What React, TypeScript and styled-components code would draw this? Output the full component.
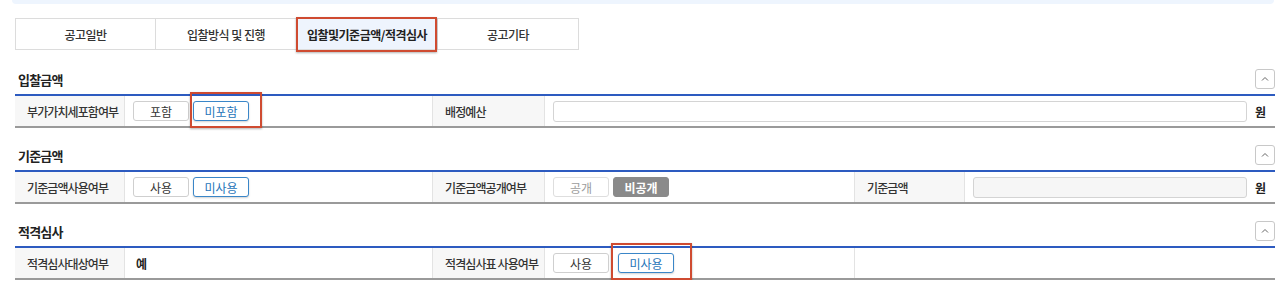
import React from "react";
import styled, { createGlobalStyle } from "styled-components";

const GlobalStyle = createGlobalStyle`
  html, body {
    margin: 0;
    padding: 0;
    background: #fff;
    font-family: "Noto Sans CJK KR", "Noto Sans", sans-serif;
    color: #333;
  }
  * { box-sizing: border-box; }
`;

const Page = styled.div`
  width: 1280px;
`;

const TopPanel = styled.div`
  height: 4px;
  margin: 0 6px 0 12px;
  background: #eef5fe;
  border-radius: 0 0 7px 7px;
`;

const Body = styled.div`
  padding: 0 5px 0 15px;
`;

const TabBar = styled.div`
  display: flex;
  margin-top: 14px;
`;

const Tab = styled.div<{ $active?: boolean }>`
  position: relative;
  width: 141px;
  height: 32px;
  display: flex;
  align-items: center;
  justify-content: center;
  border: 1px solid #dcdcdc;
  border-left: none;
  background: ${p => (p.$active ? "#eef4fd" : "#fff")};
  font-size: 12px;
  letter-spacing: -0.5px;
  font-weight: ${p => (p.$active ? 700 : 500)};
  color: ${p => (p.$active ? "#222" : "#333")};
  &:first-child {
    border-left: 1px solid #dcdcdc;
  }
`;

const Mark = styled.span<{ $t: number; $r: number; $b: number; $l: number }>`
  position: absolute;
  top: ${p => p.$t}px;
  right: ${p => p.$r}px;
  bottom: ${p => p.$b}px;
  left: ${p => p.$l}px;
  border: 2px solid #cf4b31;
  box-shadow: 0 1px 2px rgba(0, 0, 0, 0.3);
  pointer-events: none;
`;

const Section = styled.section<{ $gap: number }>`
  margin-top: ${p => p.$gap}px;
`;

const SectionHead = styled.div`
  height: 20px;
  display: flex;
  align-items: center;
  justify-content: space-between;
  margin-bottom: 5px;
`;

const SectionTitle = styled.h3`
  margin: 0;
  padding-left: 3px;
  font-size: 13px;
  font-weight: 700;
  letter-spacing: -0.8px;
  color: #222;
`;

const FoldButton = styled.button`
  width: 20px;
  height: 20px;
  padding: 0;
  display: flex;
  align-items: center;
  justify-content: center;
  border: 1px solid #c8c8c8;
  border-radius: 3px;
  background: #fff;
`;

const Row = styled.div<{ $cols: string }>`
  display: grid;
  grid-template-columns: ${p => p.$cols};
  border-top: 2px solid #2d5bc0;
  border-bottom: 2px solid #9a9a9a;
  height: 34px;
`;

const Label = styled.div`
  display: flex;
  align-items: center;
  padding-left: 12px;
  background: #f7f7f7;
  border-right: 1px solid #e3e3e3;
  font-size: 12px;
  font-weight: 500;
  letter-spacing: -0.9px;
  color: #333;
`;

const Value = styled.div<{ $last?: boolean }>`
  display: flex;
  align-items: center;
  padding: 0 9px 0 8px;
  border-right: ${p => (p.$last ? "none" : "1px solid #e3e3e3")};
  font-size: 12px;
`;

const ButtonGroup = styled.div<{ $gap?: number }>`
  display: flex;
  gap: ${p => p.$gap ?? 4}px;
`;

const Holder = styled.span`
  position: relative;
  display: inline-flex;
`;

type Kind = "normal" | "selected" | "disabled" | "filled";

const Choice = styled.button<{ $kind: Kind }>`
  height: 20px;
  min-width: 56px;
  padding: 0 10px;
  border-radius: 3px;
  font-family: inherit;
  font-size: 12px;
  letter-spacing: 0;
  background: ${p => (p.$kind === "filled" ? "#8a8a8a" : "#fff")};
  border: 1px solid
    ${p =>
      p.$kind === "selected"
        ? "#3a86c8"
        : p.$kind === "filled"
        ? "#8a8a8a"
        : p.$kind === "disabled"
        ? "#dedede"
        : "#cfcfcf"};
  color: ${p =>
    p.$kind === "selected"
      ? "#2674b8"
      : p.$kind === "filled"
      ? "#fff"
      : p.$kind === "disabled"
      ? "#9c9c9c"
      : "#333"};
  font-weight: ${p => (p.$kind === "filled" ? 700 : 400)};
  box-shadow: ${p =>
    p.$kind === "selected" ? "0 1px 2px rgba(0,0,0,0.18)" : "none"};
`;

const TextInput = styled.input`
  flex: 1;
  height: 21px;
  border: 1px solid #d4d4d4;
  border-radius: 3px;
  background: #fff;
  &:disabled {
    background: #f6f6f6;
  }
`;

const Unit = styled.span`
  margin-left: 8px;
  font-size: 12px;
  font-weight: 700;
  color: #222;
`;

const Strong = styled.span`
  padding-left: 3px;
  font-weight: 700;
  color: #222;
`;

const Chevron = () => (
  <svg width="10" height="10" viewBox="0 0 10 10">
    <polyline
      points="2,6.5 5,3.5 8,6.5"
      fill="none"
      stroke="#666"
      strokeWidth="1"
    />
  </svg>
);

const Head = ({ title }: { title: string }) => (
  <SectionHead>
    <SectionTitle>{title}</SectionTitle>
    <FoldButton>
      <Chevron />
    </FoldButton>
  </SectionHead>
);

const tabs = ["공고일반", "입찰방식 및 진행", "입찰및기준금액/적격심사", "공고기타"];

const App = () => {
  return (
    <Page>
      <GlobalStyle />
      <TopPanel />
      <Body>
        <TabBar>
          {tabs.map((t, i) => (
            <Tab key={t} $active={i === 2}>
              {t}
              {i === 2 && <Mark $t={-2} $r={0} $b={-3} $l={-1} />}
            </Tab>
          ))}
        </TabBar>

        <Section $gap={19}>
          <Head title="입찰금액" />
          <Row $cols="110px 308px 112px 1fr">
            <Label>부가가치세포함여부</Label>
            <Value>
              <ButtonGroup>
                <Choice $kind="normal">포함</Choice>
                <Holder>
                  <Choice $kind="selected">미포함</Choice>
                  <Mark $t={-9} $r={-13} $b={-7} $l={-3} />
                </Holder>
              </ButtonGroup>
            </Value>
            <Label>배정예산</Label>
            <Value $last>
              <TextInput />
              <Unit>원</Unit>
            </Value>
          </Row>
        </Section>

        <Section $gap={17}>
          <Head title="기준금액" />
          <Row $cols="110px 308px 112px 310px 110px 1fr">
            <Label>기준금액사용여부</Label>
            <Value>
              <ButtonGroup>
                <Choice $kind="normal">사용</Choice>
                <Choice $kind="selected">미사용</Choice>
              </ButtonGroup>
            </Value>
            <Label>기준금액공개여부</Label>
            <Value>
              <ButtonGroup>
                <Choice $kind="disabled">공개</Choice>
                <Choice $kind="filled">비공개</Choice>
              </ButtonGroup>
            </Value>
            <Label>기준금액</Label>
            <Value $last>
              <TextInput disabled />
              <Unit>원</Unit>
            </Value>
          </Row>
        </Section>

        <Section $gap={17}>
          <Head title="적격심사" />
          <Row $cols="110px 308px 112px 310px 1fr">
            <Label>적격심사대상여부</Label>
            <Value>
              <Strong>예</Strong>
            </Value>
            <Label>적격심사표 사용여부</Label>
            <Value>
              <ButtonGroup $gap={9}>
                <Choice $kind="normal">사용</Choice>
                <Holder>
                  <Choice $kind="selected">미사용</Choice>
                  <Mark $t={-10} $r={-18} $b={-7} $l={-7} />
                </Holder>
              </ButtonGroup>
            </Value>
            <Value $last />
          </Row>
        </Section>
      </Body>
    </Page>
  );
};

export default App;
